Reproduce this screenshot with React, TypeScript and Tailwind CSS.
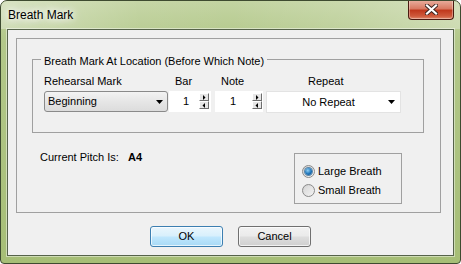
import React from "react";

function Spinner() {
  return (
    <div className="flex flex-col w-[10px] h-[16px] mt-[2px]">
      <div className="flex-1 flex items-center justify-center bg-[#e6e6e6] border-t border-l border-t-white border-l-white border-r border-b border-r-[#6d6d6d] border-b-[#6d6d6d]">
        <svg width="4" height="5" viewBox="0 0 4 5"><path d="M1 0 L3.5 2.5 L1 5 Z" fill="#000" /></svg>
      </div>
      <div className="flex-1 flex items-center justify-center bg-[#e6e6e6] border-t border-l border-t-white border-l-white border-r border-b border-r-[#6d6d6d] border-b-[#6d6d6d]">
        <svg width="4" height="5" viewBox="0 0 4 5"><path d="M3 0 L0.5 2.5 L3 5 Z" fill="#000" /></svg>
      </div>
    </div>
  );
}

function Arrow() {
  return (
    <svg width="7" height="4" viewBox="0 0 7 4"><path d="M0 0 H7 L3.5 4 Z" fill="#000" /></svg>
  );
}

function Radio({ checked, label }: { checked?: boolean; label: string }) {
  return (
    <div className="h-[19px] flex items-center">
      <div className="w-[13px] h-[13px] rounded-full border border-[#8a8a8a] bg-[linear-gradient(135deg,#cfcfcf,#f6f6f6)] flex items-center justify-center">
        {checked ? (
          <div className="w-[7px] h-[7px] rounded-full bg-[radial-gradient(circle_at_40%_35%,#8fd0f5,#1d73b8_55%,#0d4b86)] shadow-[0_0_0_1px_#5a86a8]" />
        ) : (
          <div className="w-[9px] h-[9px] rounded-full bg-[linear-gradient(135deg,#d8d8d8,#f0f0f0)]" />
        )}
      </div>
      <span className="ml-[3px]">{label}</span>
    </div>
  );
}

export default function App() {
  return (
    <div
      className="relative flex flex-col w-[461px] h-[264px] overflow-hidden rounded-t-[7px] rounded-b-[4px] border border-[#3e4b30] bg-[linear-gradient(180deg,#c3d4a2_0px,#b3c88a_40px,#a6be76_100%)] text-black"
      style={{ fontFamily: '"Liberation Sans", Arial, sans-serif' }}
    >
      {/* Title bar */}
      <div className="relative h-[28px] flex items-center pl-[7px] bg-[linear-gradient(90deg,rgba(255,255,255,0.35)_0%,rgba(255,255,255,0.05)_30%,rgba(255,255,255,0)_50%,rgba(255,255,255,0.12)_75%,rgba(255,255,255,0.3)_100%)]">
        <span className="text-[12px] leading-[15px] text-black [text-shadow:0_0_6px_#fff,0_0_10px_#fff,0_0_14px_#fff]">
          Breath Mark
        </span>
        <div className="absolute top-[-1px] right-[6px] w-[46px] h-[20px] rounded-b-[4px] border border-t-0 border-[#4a1a10] bg-[linear-gradient(180deg,#eab1a1_0%,#d97a63_45%,#c0391d_55%,#cf5a3c_85%,#e08a6c_100%)] flex items-center justify-center shadow-[inset_0_0_0_1px_rgba(255,255,255,0.35)]">
          <svg width="13" height="11" viewBox="0 0 13 11">
            <path d="M2 1.5 L11 9.5 M11 1.5 L2 9.5" stroke="#3b2520" strokeWidth="4" strokeLinecap="square" />
            <path d="M2 1.5 L11 9.5 M11 1.5 L2 9.5" stroke="#fff" strokeWidth="2.2" strokeLinecap="square" />
          </svg>
        </div>
      </div>

      {/* Client area */}
      <div className="flex-1 px-[6px] pb-[7px]">
        <div className="h-full border border-[#56634a] shadow-[0_0_0_1px_rgba(255,255,255,0.45)] bg-[#f0f0f0] text-[11px] leading-[13px] px-[8px] pt-[8px]">
          {/* Panel */}
          <div className="w-[425px] h-[175px] border border-[#a0a0a0]">
            {/* Group box */}
            <div className="relative ml-[15px] mt-[20px] w-[392px] h-[74px] border border-[#a0a0a0]">
              <span className="absolute left-[8px] top-[-5px] px-[3px] bg-[#f0f0f0]">
                Breath Mark At Location (Before Which Note)
              </span>
              <div className="flex mt-[15px] pl-[11px]">
                <span className="w-[131px]">Rehearsal Mark</span>
                <span className="w-[46px]">Bar</span>
                <span className="w-[87px]">Note</span>
                <span>Repeat</span>
              </div>
              <div className="flex mt-[3px] pl-[11px] h-[21px]">
                <div className="w-[124px] h-[21px] rounded-[3px] border border-[#8a8a8a] bg-[linear-gradient(180deg,#f3f3f3,#e6e6e6_50%,#dcdcdc)] flex items-center pl-[3px] pr-[4px]">
                  <span className="flex-1">Beginning</span>
                  <Arrow />
                </div>
                <div className="ml-[1px] w-[42px] h-[21px] bg-white flex">
                  <span className="w-[30px] pl-[14px] leading-[21px]">1</span>
                  <Spinner />
                </div>
                <div className="ml-[4px] w-[48px] h-[21px] bg-white flex">
                  <span className="w-[37px] pl-[15px] leading-[21px]">1</span>
                  <Spinner />
                </div>
                <div className="ml-[3px] w-[135px] h-[22px] bg-white border border-[#e3e3e3] flex items-center pr-[5px]">
                  <span className="flex-1 text-center pl-[2px]">No Repeat</span>
                  <Arrow />
                </div>
              </div>
            </div>

            {/* Lower row */}
            <div className="flex mt-[20px]">
              <div className="w-[277px] flex pl-[23px] mt-[-2px]">
                <span className="w-[88px]">Current Pitch Is:</span>
                <span className="font-bold">A4</span>
              </div>
              <div className="w-[108px] h-[51px] border border-[#a0a0a0] pt-[8px] pl-[7px]">
                <Radio checked label="Large Breath" />
                <Radio label="Small Breath" />
              </div>
            </div>
          </div>

          {/* Buttons */}
          <div className="flex mt-[13px] pl-[134px] gap-[15px]">
            <div className="w-[73px] h-[21px] rounded-[3px] border border-[#3c7fb1] bg-[linear-gradient(180deg,#eaf6fd_0%,#d9f0fc_45%,#bee6fd_55%,#a7d9f5_100%)] shadow-[inset_0_0_0_1px_rgba(255,255,255,0.7)] flex items-center justify-center">
              OK
            </div>
            <div className="w-[73px] h-[21px] rounded-[3px] border border-[#707070] bg-[linear-gradient(180deg,#f2f2f2_0%,#ebebeb_45%,#dddddd_55%,#cfcfcf_100%)] shadow-[inset_0_0_0_1px_rgba(255,255,255,0.7)] flex items-center justify-center">
              Cancel
            </div>
          </div>
        </div>
      </div>
    </div>
  );
}
